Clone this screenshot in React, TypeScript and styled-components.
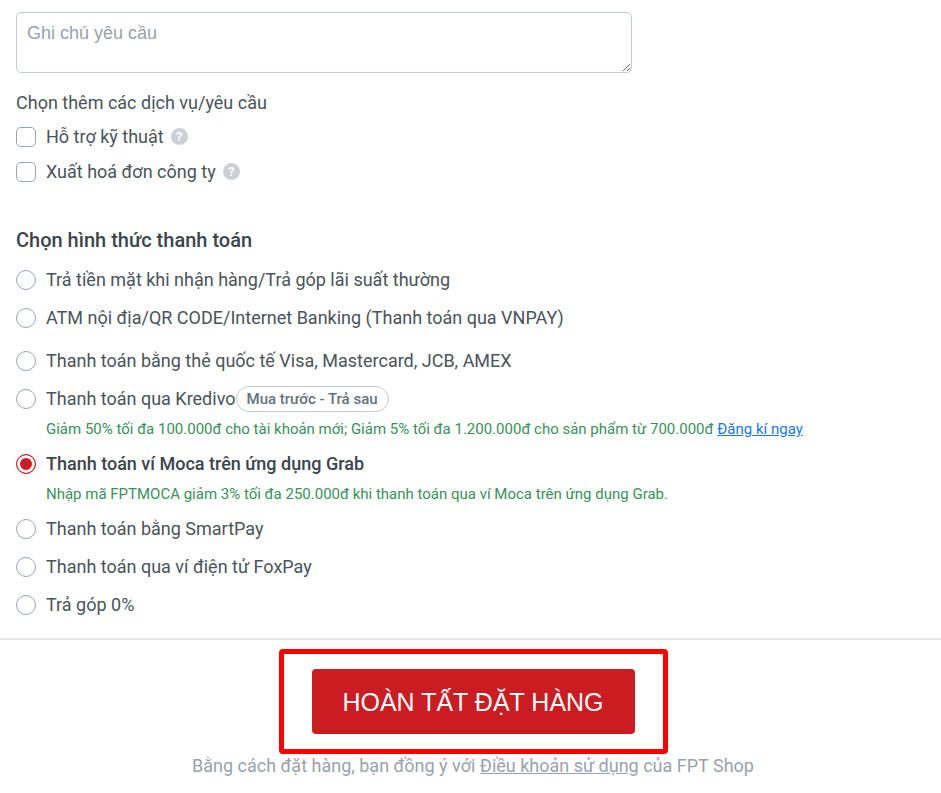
import React, { useState } from "react";
import styled, { createGlobalStyle } from "styled-components";

const GlobalStyle = createGlobalStyle`
  * { box-sizing: border-box; }
  body { margin: 0; background: #fff; color: #4b535b; font-family: Roboto, sans-serif; font-size: 18px; line-height: 24px; }
`;

const Form = styled.form`
  padding-top: 12px;
`;
const Content = styled.div`
  padding: 0 16px;
`;
const Note = styled.textarea`
  display: block;
  width: 100%;
  max-width: 616px;
  height: 61px;
  padding: 8px 10px;
  border: 1px solid #c3cbd2;
  border-radius: 5px;
  font: 18px/24px "Liberation Sans", sans-serif;
  color: inherit;
  outline: none;
  &::placeholder { color: #99a2aa; opacity: 1; }
`;
const Group = styled.fieldset<{ $top: number }>`
  margin: ${(p) => p.$top}px 0 0;
  padding: 0;
  border: 0;
  min-width: 0;
`;
const Legend = styled.legend<{ $strong?: boolean }>`
  padding: 0;
  color: ${(p) => (p.$strong ? "#3c444c" : "inherit")};
  font-size: ${(p) => (p.$strong ? "20px" : "18px")};
  font-weight: ${(p) => (p.$strong ? 500 : 400)};
  margin-bottom: ${(p) => (p.$strong ? "16px" : "10px")};
`;
const Options = styled.div<{ $gap: number }>`
  display: flex;
  flex-direction: column;
  gap: ${(p) => p.$gap}px;
`;
const Row = styled.div<{ $extra?: boolean }>`
  display: flex;
  align-items: center;
  height: 24px;
  margin-top: ${(p) => (p.$extra ? "5px" : "0")};
`;
const Choice = styled.label<{ $strong?: boolean }>`
  display: flex;
  align-items: center;
  gap: 10px;
  color: ${(p) => (p.$strong ? "#3c444c" : "inherit")};
  font-weight: ${(p) => (p.$strong ? 500 : 400)};
  white-space: nowrap;
`;
const Check = styled.input`
  appearance: none;
  flex: none;
  width: 20px;
  height: 20px;
  margin: 0;
  border: 1px solid #97a3bd;
  border-radius: 5px;
  background: #fff;
  &:checked { background: #cb1c22; }
`;
const Radio = styled(Check)`
  border-radius: 50%;
  &:checked {
    border-color: #cb1c22;
    background: #cb1c22;
    box-shadow: inset 0 0 0 3px #fff;
  }
`;
const Help = styled.button`
  display: grid;
  place-items: center;
  width: 17px;
  height: 17px;
  margin: 0 0 2px 7px;
  padding: 0;
  border: 0;
  border-radius: 50%;
  background: #cbd1d6;
  color: #fff;
  font: 700 13px/17px Roboto, sans-serif;
`;
const Badge = styled.span`
  height: 26px;
  padding: 0 10px;
  border: 1px solid #c3cbd2;
  border-radius: 13px;
  font-size: 15px;
  font-weight: 500;
  line-height: 24px;
  color: #66717b;
  white-space: nowrap;
`;
const Promo = styled.p`
  margin: 9px 0 0 30px;
  font-size: 15px;
  line-height: 18px;
  color: #38915c;
`;
const PromoLink = styled.a`
  color: #1877f2;
`;
const Footer = styled.footer`
  display: flex;
  flex-direction: column;
  align-items: center;
  margin-top: 21px;
  padding: 9px 0 14px 5px;
  border-top: 2px solid #e5e5e5;
`;
const Highlight = styled.div`
  padding: 15px 28px;
  border: 5px solid #ff0000;
  border-radius: 4px;
`;
const Submit = styled.button`
  display: block;
  width: 323px;
  height: 65px;
  padding: 0;
  border: 0;
  border-radius: 4px;
  background: #cb1c22;
  color: #fff;
  font: 400 25px/32px "Liberation Sans", sans-serif;
`;
const Terms = styled.p`
  margin: 0;
  font-size: 18px;
  color: #99a2aa;
  a { color: inherit; }
`;

const services = ["Hỗ trợ kỹ thuật", "Xuất hoá đơn công ty"];

type Method = { id: string; label: string; extra?: boolean; badge?: string; promo?: string; link?: string };
const methods: Method[] = [
  { id: "cash", label: "Trả tiền mặt khi nhận hàng/Trả góp lãi suất thường" },
  { id: "vnpay", label: "ATM nội địa/QR CODE/Internet Banking (Thanh toán qua VNPAY)" },
  { id: "card", label: "Thanh toán bằng thẻ quốc tế Visa, Mastercard, JCB, AMEX", extra: true },
  {
    id: "kredivo",
    label: "Thanh toán qua Kredivo",
    badge: "Mua trước - Trả sau",
    promo: "Giảm 50% tối đa 100.000đ cho tài khoản mới; Giảm 5% tối đa 1.200.000đ cho sản phẩm từ 700.000đ",
    link: "Đăng kí ngay",
  },
  { id: "moca", label: "Thanh toán ví Moca trên ứng dụng Grab", promo: "Nhập mã FPTMOCA giảm 3% tối đa 250.000đ khi thanh toán qua ví Moca trên ứng dụng Grab." },
  { id: "smartpay", label: "Thanh toán bằng SmartPay" },
  { id: "foxpay", label: "Thanh toán qua ví điện tử FoxPay" },
  { id: "installment", label: "Trả góp 0%" },
];

export default function App() {
  const [method, setMethod] = useState("moca");
  return (
    <>
      <GlobalStyle />
      <Form onSubmit={(e) => e.preventDefault()}>
        <Content>
          <Note aria-label="Ghi chú yêu cầu" placeholder="Ghi chú yêu cầu" />
          <Group $top={18}>
            <Legend>Chọn thêm các dịch vụ/yêu cầu</Legend>
            <Options $gap={11}>
              {services.map((s) => (
                <Row key={s}>
                  <Choice>
                    <Check type="checkbox" />
                    {s}
                  </Choice>
                  <Help type="button">?</Help>
                </Row>
              ))}
            </Options>
          </Group>
          <Group $top={44}>
            <Legend $strong>Chọn hình thức thanh toán</Legend>
            <Options $gap={14}>
              {methods.map((m) => (
                <div key={m.id}>
                  <Row $extra={m.extra}>
                    <Choice $strong={m.id === method}>
                      <Radio type="radio" name="payment" checked={m.id === method} onChange={() => setMethod(m.id)} />
                      {m.label}
                    </Choice>
                    {m.badge && <Badge>{m.badge}</Badge>}
                  </Row>
                  {m.promo && (
                    <Promo>
                      {m.promo} {m.link && <PromoLink href="#">{m.link}</PromoLink>}
                    </Promo>
                  )}
                </div>
              ))}
            </Options>
          </Group>
        </Content>
        <Footer>
          <Highlight>
            <Submit type="submit">HOÀN TẤT ĐẶT HÀNG</Submit>
          </Highlight>
          <Terms>
            Bằng cách đặt hàng, bạn đồng ý với <a href="#">Điều khoản sử dụng</a> của FPT Shop
          </Terms>
        </Footer>
      </Form>
    </>
  );
}
